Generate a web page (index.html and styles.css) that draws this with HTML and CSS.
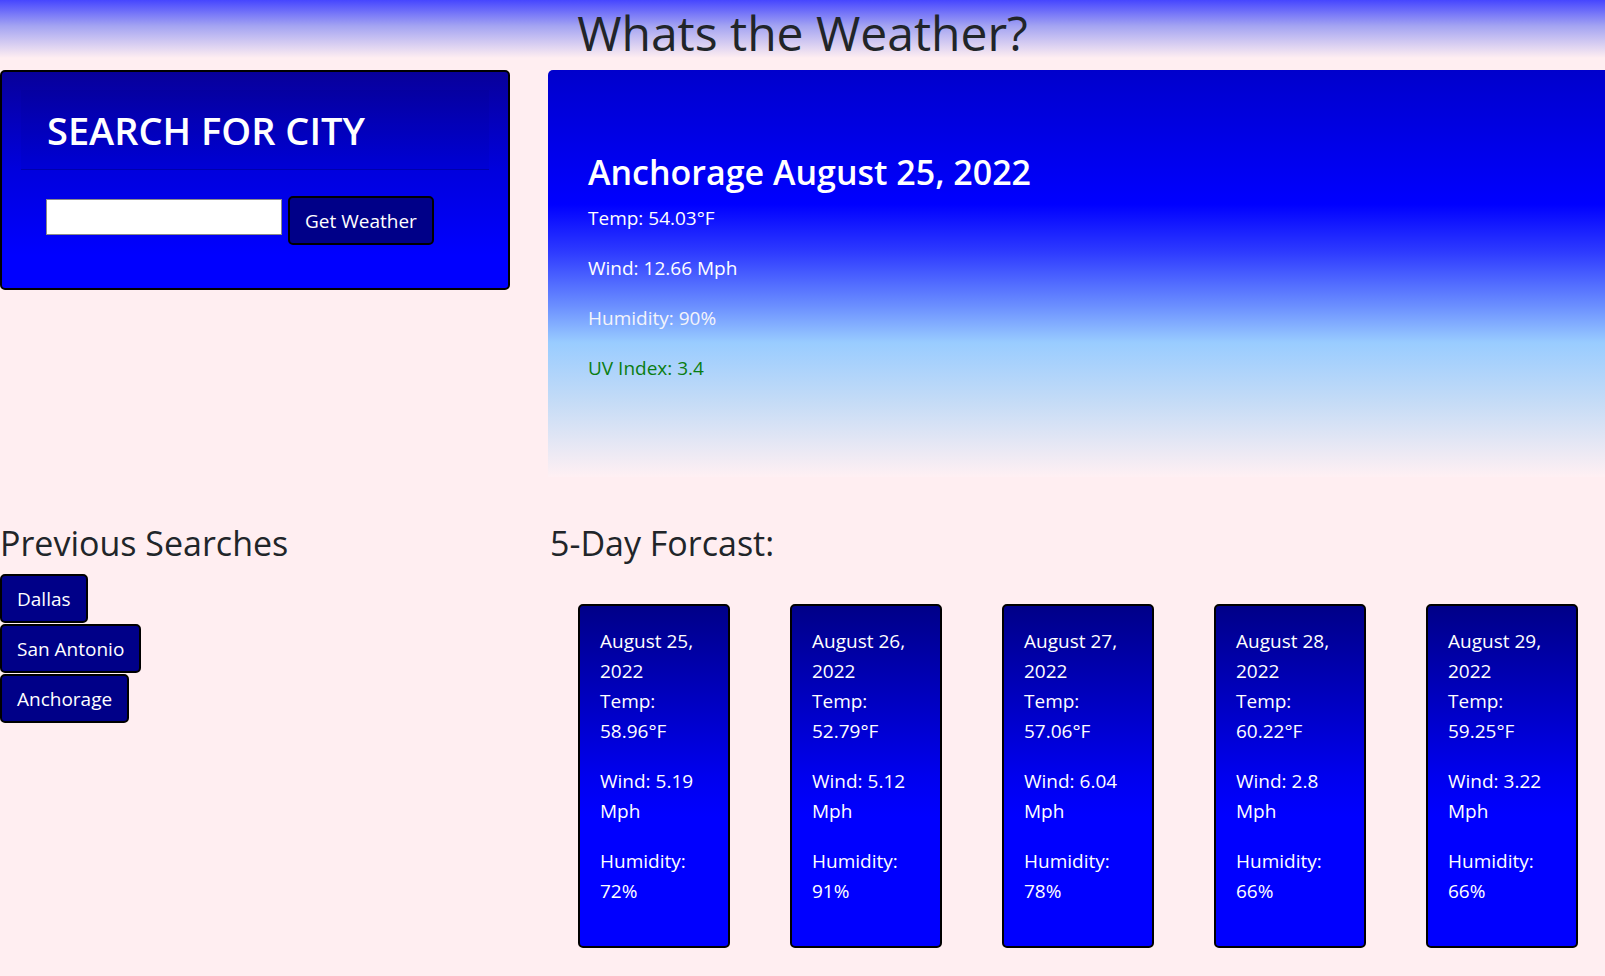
FILE: index.html
```html
<!DOCTYPE html>
<html lang="en">
<head>
<meta charset="utf-8">
<title>Whats the Weather?</title>
<link rel="stylesheet" href="styles.css">
</head>
<body>
<header class="site-header">
  <h1 class="site-title">Whats the Weather?</h1>
</header>
<main class="layout">
  <section class="search-card">
    <div class="search-head">
      <h2 class="search-title">SEARCH FOR CITY</h2>
    </div>
    <form class="search-form">
      <input class="search-input" type="text" aria-label="City">
      <button class="btn" type="button">Get Weather</button>
    </form>
  </section>

  <section class="current">
    <h2 class="current-title">Anchorage August 25, 2022</h2>
    <p class="stat">Temp: 54.03°F</p>
    <p class="stat">Wind: 12.66 Mph</p>
    <p class="stat stat-soft">Humidity: 90%</p>
    <p class="stat stat-uv">UV Index: 3.4</p>
  </section>

  <section class="history">
    <h2 class="section-title">Previous Searches</h2>
    <div class="history-list">
      <button class="btn" type="button">Dallas</button>
      <button class="btn" type="button">San Antonio</button>
      <button class="btn" type="button">Anchorage</button>
    </div>
  </section>

  <section class="forecast">
    <h2 class="section-title">5-Day Forcast:</h2>
    <div class="forecast-grid">
      <div class="day">
        <div class="day-date">August 25, 2022</div>
        <p class="day-line">Temp: 58.96°F</p>
        <p class="day-line">Wind: 5.19 Mph</p>
        <p class="day-line">Humidity: 72%</p>
      </div>
      <div class="day">
        <div class="day-date">August 26, 2022</div>
        <p class="day-line">Temp: 52.79°F</p>
        <p class="day-line">Wind: 5.12 Mph</p>
        <p class="day-line">Humidity: 91%</p>
      </div>
      <div class="day">
        <div class="day-date">August 27, 2022</div>
        <p class="day-line">Temp: 57.06°F</p>
        <p class="day-line">Wind: 6.04 Mph</p>
        <p class="day-line">Humidity: 78%</p>
      </div>
      <div class="day">
        <div class="day-date">August 28, 2022</div>
        <p class="day-line">Temp: 60.22°F</p>
        <p class="day-line">Wind: 2.8 Mph</p>
        <p class="day-line">Humidity: 66%</p>
      </div>
      <div class="day">
        <div class="day-date">August 29, 2022</div>
        <p class="day-line">Temp: 59.25°F</p>
        <p class="day-line">Wind: 3.22 Mph</p>
        <p class="day-line">Humidity: 66%</p>
      </div>
    </div>
  </section>
</main>
</body>
</html>
```

FILE: styles.css
```css
* { box-sizing: border-box; }

html, body {
  margin: 0;
  padding: 0;
}

body {
  background: #ffeef1;
  font-family: "Open Sans", "Noto Sans", Arial, sans-serif;
  font-size: 19px;
  line-height: 30px;
  color: #212529;
  overflow-x: hidden;
}

.site-header {
  height: 58px;
  background: linear-gradient(to bottom, #4646ff 0%, #a4a4f2 45%, #ffeef1 100%);
  text-align: center;
  margin-bottom: 12px;
}

.site-title {
  margin: 0;
  font-size: 48px;
  line-height: 66px;
  height: 58px;
  font-weight: 500;
  color: #212529;
}

.layout {
  display: grid;
  grid-template-columns: 510px 1fr;
  column-gap: 38px;
  row-gap: 46px;
}

/* search card */
.search-card {
  align-self: start;
  height: 220px;
  border: 2px solid #000;
  border-radius: 5px;
  padding: 18px 19px;
  background: linear-gradient(to bottom, #08009a 0%, #0000dd 45%, #0000ff 85%);
  color: #fff;
}

.search-head {
  padding: 16px 26px 15px;
  background: rgba(0, 0, 0, 0.03);
  border-bottom: 1px solid rgba(0, 0, 0, 0.2);
}

.search-title {
  margin: 0;
  font-size: 38px;
  line-height: 48px;
  font-weight: 600;
  color: #fff;
}

.search-form {
  display: flex;
  align-items: flex-start;
  gap: 6px;
  padding: 26px 25px 0;
}

.search-input {
  width: 236px;
  height: 36px;
  margin-top: 3px;
  border: 1px solid #8a8a8a;
  background: #fff;
  padding: 0 6px;
  font: inherit;
}

.btn {
  display: block;
  background: #000088;
  color: #fff;
  border: 2px solid #000;
  border-radius: 5px;
  padding: 9px 15px 7px;
  font-family: inherit;
  font-size: 19px;
  line-height: 29px;
  cursor: pointer;
}

/* current weather */
.current {
  height: 407px;
  padding: 81px 40px 0;
  border-top-left-radius: 5px;
  background: linear-gradient(to bottom, #0000cc 0%, #0000ff 33%, #2f3cff 45%, #6b8fff 58%, #99ccff 67%, #c6dcf6 82%, #fff0f3 100%);
  color: #fff;
}

.current-title {
  margin: 0 0 10px;
  font-size: 34px;
  line-height: 42px;
  font-weight: 600;
  color: #fff;
}

.stat {
  margin: 0 0 20px;
}

.stat-soft { color: #f4f4fa; }

.stat-uv { color: #0a7d12; }

/* lower row */
.section-title {
  margin: 0;
  font-size: 34px;
  line-height: 41px;
  font-weight: 500;
  color: #212529;
}

.history-list {
  margin-top: 10px;
  display: flex;
  flex-direction: column;
  align-items: flex-start;
  gap: 1px;
}

.forecast {
  padding-left: 2px;
}

.forecast-grid {
  margin-top: 40px;
  padding-left: 28px;
  display: grid;
  grid-template-columns: repeat(5, 152px);
  column-gap: 60px;
}

.day {
  border: 2px solid #000;
  border-radius: 5px;
  padding: 20px 20px 20px;
  background: linear-gradient(to bottom, #000088 0%, #0000ee 50%, #0000ff 62%);
  color: #fff;
  font-size: 19px;
  line-height: 30px;
}

.day-date { margin: 0; }

.day-line { margin: 0 0 20px; }
```
